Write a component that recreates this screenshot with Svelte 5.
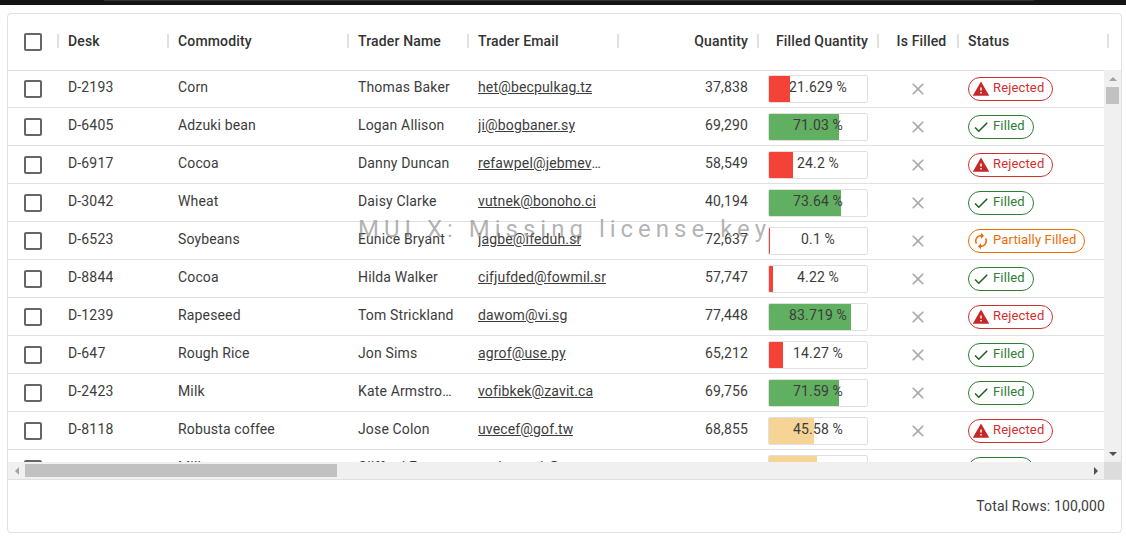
<script>
  const check = "M19 5v14H5V5h14m0-2H5c-1.1 0-2 .9-2 2v14c0 1.1.9 2 2 2h14c1.1 0 2-.9 2-2V5c0-1.1-.9-2-2-2z";
  const close = "M19 6.41 17.59 5 12 10.59 6.41 5 5 6.41 10.59 12 5 17.59 6.41 19 12 13.41 17.59 19 19 17.59 13.41 12z";
  const statuses = {
    Rejected: { cls: "rejected", path: "M1 21h22L12 2 1 21zm12-3h-2v-2h2v2zm0-4h-2v-4h2v4z" },
    Filled: { cls: "filled", path: "M9 16.2 4.8 12l-1.4 1.4L9 19 21 7l-1.4-1.4L9 16.2z" },
    "Partially Filled": {
      cls: "partial",
      path: "M12 6v3l4-4-4-4v3c-4.42 0-8 3.58-8 8 0 1.57.46 3.03 1.24 4.26L6.7 14.8c-.45-.83-.7-1.79-.7-2.8 0-3.31 2.69-6 6-6zm6.76 1.74L17.3 9.2c.44.84.7 1.79.7 2.8 0 3.31-2.69 6-6 6v-3l-4 4 4 4v-3c4.42 0 8-3.58 8-8 0-1.57-.46-3.03-1.24-4.26z"
    }
  };
  const headers = [
    { label: "", cls: "" },
    { label: "Desk", cls: "" },
    { label: "Commodity", cls: "" },
    { label: "Trader Name", cls: "" },
    { label: "Trader Email", cls: "" },
    { label: "Quantity", cls: "right" },
    { label: "Filled Quantity", cls: "center" },
    { label: "Is Filled", cls: "center" },
    { label: "Status", cls: "" }
  ];
  const rows = [
    ["D-2193", "Corn", "Thomas Baker", "het@becpulkag.tz", "37,838", 21.629, "Rejected"],
    ["D-6405", "Adzuki bean", "Logan Allison", "ji@bogbaner.sy", "69,290", 71.03, "Filled"],
    ["D-6917", "Cocoa", "Danny Duncan", "refawpel@jebmevol.kz", "58,549", 24.2, "Rejected"],
    ["D-3042", "Wheat", "Daisy Clarke", "vutnek@bonoho.ci", "40,194", 73.64, "Filled"],
    ["D-6523", "Soybeans", "Eunice Bryant", "jagbe@ifeduh.sr", "72,637", 0.1, "Partially Filled"],
    ["D-8844", "Cocoa", "Hilda Walker", "cifjufded@fowmil.sr", "57,747", 4.22, "Filled"],
    ["D-1239", "Rapeseed", "Tom Strickland", "dawom@vi.sg", "77,448", 83.719, "Rejected"],
    ["D-647", "Rough Rice", "Jon Sims", "agrof@use.py", "65,212", 14.27, "Filled"],
    ["D-2423", "Milk", "Kate Armstrong", "vofibkek@zavit.ca", "69,756", 71.59, "Filled"],
    ["D-8118", "Robusta coffee", "Jose Colon", "uvecef@gof.tw", "68,855", 45.58, "Rejected"],
    ["D-5570", "Millet", "Clifford Fox", "mabenwuk@ove.ug", "63,580", 48.6, "Filled"]
  ];
  const tone = (v) => (v < 30 ? "low" : v <= 70 ? "mid" : "high");
</script>

<div class="page">
  <div class="topbar"><div class="strip"></div></div>
  <div class="grid">
    <div class="header">
      {#each headers as h, i}
        <div class="hcell c{i}">
          {#if i === 0}
            <div class="label box">
              <svg width="24" height="24" viewBox="0 0 24 24"><path d={check} /></svg>
            </div>
          {:else}
            <div class="label {h.cls}">{h.label}</div>
          {/if}
          <span class="sep"></span>
        </div>
      {/each}
    </div>

    <div class="middle">
      <div class="viewport">
        {#each rows as r}
          <div class="row">
            <div class="cell c0 box">
              <svg width="24" height="24" viewBox="0 0 24 24"><path d={check} /></svg>
            </div>
            <div class="cell c1"><span class="txt">{r[0]}</span></div>
            <div class="cell c2"><span class="txt">{r[1]}</span></div>
            <div class="cell c3"><span class="txt">{r[2]}</span></div>
            <div class="cell c4"><span class="txt"><a href="#top">{r[3]}</a></span></div>
            <div class="cell c5 right"><span class="txt">{r[4]}</span></div>
            <div class="cell c6">
              <div class="bar">
                <div class="fill {tone(r[5])}" style="width:{r[5]}%"></div>
                <div class="val">{r[5]} %</div>
              </div>
            </div>
            <div class="cell c7 box">
              <svg class="x" width="20" height="20" viewBox="0 0 24 24"><path d={close} /></svg>
            </div>
            <div class="cell c8">
              <div class="chip {statuses[r[6]].cls}">
                <svg width="18" height="18" viewBox="0 0 24 24"><path d={statuses[r[6]].path} /></svg>
                <span>{r[6]}</span>
              </div>
            </div>
          </div>
        {/each}
      </div>
      <div class="vscroll">
        <div class="btn"><span class="tri up"></span></div>
        <div class="vthumb"></div>
        <div class="grow"></div>
        <div class="btn"><span class="tri down"></span></div>
      </div>
    </div>

    <div class="hscroll">
      <div class="btn"><span class="tri left"></span></div>
      <div class="hthumb"></div>
      <div class="grow"></div>
      <div class="btn"><span class="tri right"></span></div>
      <div class="corner"></div>
    </div>

    <div class="footer">Total Rows: 100,000</div>

    <div class="watermark">MUI X: Missing license key</div>
  </div>
</div>

<style>
  :global(body) {
    margin: 0;
    background: #fff;
  }
  .page {
    width: 1126px;
    height: 539px;
    overflow: hidden;
    font-family: Roboto, "Liberation Sans", sans-serif;
    font-size: 14px;
    letter-spacing: 0.15px;
    color: #3c3c3c;
  }
  .topbar {
    height: 5px;
    background: #151515;
  }
  .strip {
    height: 1px;
    width: 930px;
    margin-left: 104px;
    background: #333;
  }
  .grid {
    position: relative;
    box-sizing: border-box;
    width: 1115px;
    height: 520px;
    margin: 8px 0 0 7px;
    border: 1px solid #e0e0e0;
    border-radius: 4px;
    display: flex;
    flex-direction: column;
    overflow: hidden;
  }
  .header {
    display: flex;
    height: 56px;
    flex: none;
  }
  .hcell {
    display: flex;
    align-items: center;
    flex: none;
    font-weight: 500;
    color: #333;
    padding-bottom: 2px;
    box-sizing: border-box;
  }
  .label {
    flex: 1;
    min-width: 0;
    padding: 0 10px;
    white-space: nowrap;
  }
  .label.box {
    display: flex;
    padding: 2px 0 0 13px;
  }
  .label.right {
    text-align: right;
    padding-right: 9px;
  }
  .label.center {
    text-align: center;
    padding-left: 18px;
  }
  .sep {
    flex: none;
    width: 2px;
    height: 14px;
    margin-right: -1px;
    background: #e0e0e0;
  }
  .c0 { width: 50px; }
  .c1 { width: 110px; }
  .c2 { width: 180px; }
  .c3 { width: 120px; }
  .c4 { width: 150px; }
  .c5 { width: 140px; }
  .c6 { width: 120px; }
  .c7 { width: 80px; }
  .c8 { width: 150px; }
  .middle {
    display: flex;
    height: 392px;
    flex: none;
  }
  .viewport {
    flex: 1;
    min-width: 0;
    overflow: hidden;
  }
  .row {
    display: flex;
    width: 1100px;
    height: 38px;
    box-sizing: border-box;
    border-bottom: 1px solid #e0e0e0;
  }
  .row:first-child {
    box-shadow: inset 0 1px #e0e0e0;
  }
  .cell {
    flex: none;
    box-sizing: border-box;
    padding: 0 10px;
    display: flex;
    align-items: center;
    min-width: 0;
  }
  .cell.box {
    justify-content: center;
    padding: 0;
  }
  .cell.right {
    justify-content: flex-end;
  }
  .txt {
    display: block;
    min-width: 0;
    overflow: hidden;
    white-space: nowrap;
    text-overflow: ellipsis;
    margin-bottom: 3px;
  }
  .row:last-child .c1 .txt,
  .row:last-child .c5 .txt {
    margin-bottom: 1px;
  }
  a {
    color: inherit;
  }
  svg path {
    fill: rgba(0, 0, 0, 0.6);
  }
  .x path {
    fill: #aaa;
  }
  .bar {
    position: relative;
    box-sizing: border-box;
    width: 100px;
    height: 28px;
    border: 1px solid #e0e0e0;
    border-radius: 2px;
    overflow: hidden;
  }
  .fill {
    height: 100%;
  }
  .fill.low { background: #f44336; }
  .fill.mid { background: #efbb5aa3; }
  .fill.high { background: #088208a3; }
  .val {
    position: absolute;
    left: 0;
    right: 0;
    top: 0;
    line-height: 23px;
    text-align: center;
  }
  .row:last-child .val {
    top: 2px;
  }
  .chip {
    display: inline-flex;
    align-items: center;
    box-sizing: border-box;
    height: 24px;
    border: 1px solid;
    border-radius: 12px;
    padding: 0 8px 0 3px;
    font-size: 13px;
  }
  .chip span {
    margin-left: 3px;
    margin-bottom: 3px;
  }
  .chip.rejected { color: #d32f2f; }
  .chip.rejected path { fill: #c62828; }
  .chip.filled { color: #2e7d32; }
  .chip.filled path { fill: #1b5e20; }
  .chip.partial { color: #ed6c02; }
  .chip.partial path { fill: #ed6c02; }
  .vscroll {
    flex: none;
    width: 17px;
    background: #f0f0f0;
    display: flex;
    flex-direction: column;
  }
  .btn {
    flex: none;
    width: 17px;
    height: 17px;
    display: flex;
    align-items: center;
    justify-content: center;
  }
  .grow {
    flex: 1;
  }
  .vthumb {
    height: 17px;
    margin: 0 2px;
    background: #c1c1c1;
    flex: none;
  }
  .hscroll {
    height: 17px;
    flex: none;
    display: flex;
    background: #f0f0f0;
  }
  .hthumb {
    width: 312px;
    margin: 2px 0;
    background: #c1c1c1;
    flex: none;
  }
  .corner {
    width: 17px;
    flex: none;
    background: #dcdcdc;
  }
  .tri {
    width: 0;
    height: 0;
    border-style: solid;
    border-color: transparent;
  }
  .tri.up {
    border-width: 0 4px 4px;
    border-bottom-color: #a3a3a3;
  }
  .tri.down {
    border-width: 4px 4px 0;
    border-top-color: #505050;
  }
  .tri.left {
    border-width: 4px 4px 4px 0;
    border-right-color: #a3a3a3;
  }
  .tri.right {
    border-width: 4px 0 4px 4px;
    border-left-color: #505050;
  }
  .footer {
    flex: none;
    height: 53px;
    box-sizing: border-box;
    border-top: 1px solid #e0e0e0;
    padding-right: 16px;
    display: flex;
    align-items: center;
    justify-content: flex-end;
  }
  .watermark {
    position: absolute;
    left: 0;
    right: 0;
    top: 201px;
    text-align: center;
    font-size: 24px;
    letter-spacing: 5px;
    color: #8282829e;
    pointer-events: none;
  }
</style>
